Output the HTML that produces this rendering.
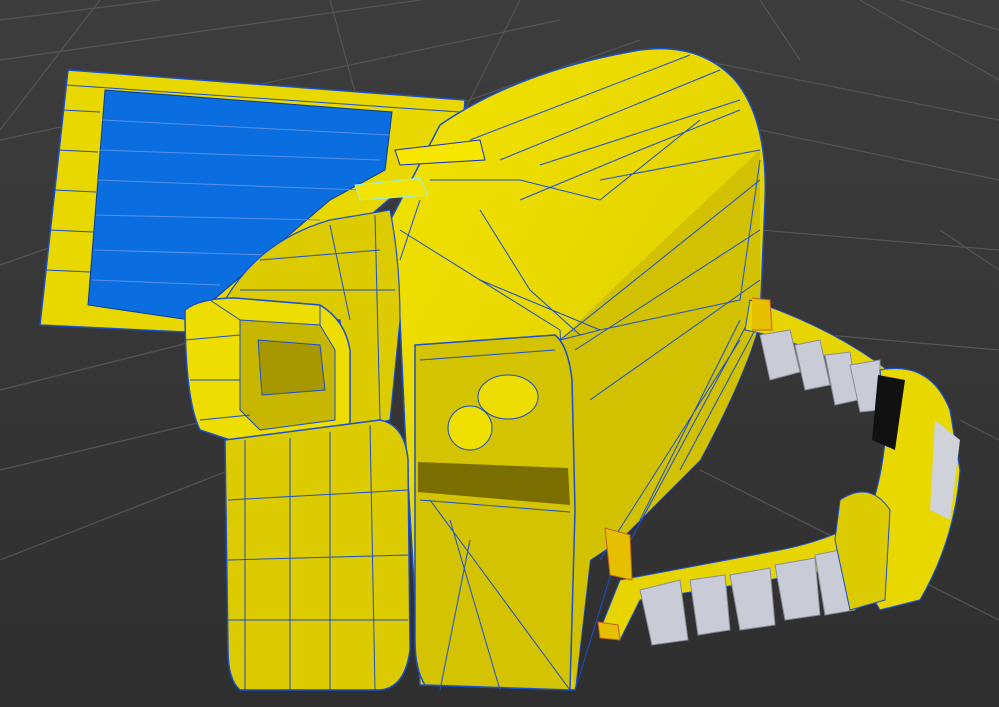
<!DOCTYPE html>
<html><head><style>html,body{margin:0;padding:0;background:#333;}svg{display:block}</style></head>
<body>
<svg width="999" height="707" viewBox="0 0 999 707" xmlns="http://www.w3.org/2000/svg">
<defs>
<linearGradient id="bg" x1="0" y1="0" x2="0" y2="1"><stop offset="0" stop-color="#3d3d3d"/><stop offset="1" stop-color="#2f2f2f"/></linearGradient>
<linearGradient id="top" x1="0" y1="0" x2="1" y2="1"><stop offset="0" stop-color="#f4e400"/><stop offset="1" stop-color="#d8c800"/></linearGradient>
</defs>
<rect width="999" height="707" fill="url(#bg)"/>
<g stroke="#555" stroke-width="1.2" fill="none">
<path d="M0 60 L420 0 M0 140 L560 20 M0 265 L640 40 M0 390 L240 330 M700 60 L999 120 M760 130 L999 180 M760 230 L999 250 M770 330 L999 350 M0 20 L160 0 M860 0 L999 80 M330 0 L360 110 M100 0 L0 130 M520 0 L460 120 M760 0 L800 60 M900 0 L999 30 M940 230 L999 270 M960 420 L999 440 M700 470 L999 620 M0 560 L230 470 M0 470 L210 420"/>
</g>
<!-- LCD panel -->
<polygon points="68,70 465,100 460,170 400,190 330,250 230,320 185,332 40,325" fill="#e8d800" stroke="#1a4fd0" stroke-width="1.5"/>
<g stroke="#1a4fd0" stroke-width="1" fill="none"><path d="M62 110 L100 112 M58 150 L98 152 M54 190 L96 192 M50 230 L93 232 M46 270 L90 272 M65 85 L460 112"/></g>
<polygon points="105,90 392,112 385,170 330,200 260,260 190,320 88,305" fill="#0a6ee0" stroke="#0b3a90"/>
<g stroke="#5a8fe6" stroke-width="1"><path d="M102 120 L390 135 M100 150 L380 160 M98 180 L360 190 M96 215 L320 220 M94 250 L270 255 M92 280 L220 285"/></g>
<!-- Main body -->
<path d="M440 125 Q520 70 640 50 Q700 42 735 80 Q768 120 765 200 L760 320 Q748 370 700 460 L620 540 L590 560 L575 690 L420 685 L405 430 L400 320 L380 240 Z" fill="url(#top)" stroke="#1a4fd0" stroke-width="1.5"/>
<path d="M560 340 Q600 300 760 150 L760 320 Q748 370 700 460 L620 540 L590 560 L575 690 L560 560 Z" fill="#d2c100"/>
<path d="M560 340 L600 330 L740 300 L760 160" fill="none" stroke="#1a4fd0"/>
<g stroke="#1a4fd0" stroke-width="1" fill="none">
<path d="M470 140 L690 55 M500 160 L720 70 M540 165 L740 100 M600 180 L760 150 M560 340 L760 180 M575 350 L760 230 M590 400 L760 280 M600 560 L740 340 M620 560 L760 300 M400 230 L560 330 M480 280 L600 330 M560 330 L570 520 M620 545 L575 690 M430 180 L520 180 L600 200 L700 120 M480 210 L530 290 L580 335 M420 200 L400 260 M640 520 L740 320 M680 470 L755 330 M520 200 L640 150 L740 110"/>
</g>
<!-- top buttons -->
<polygon points="395,150 480,140 485,160 400,165" fill="#f6e600" stroke="#1030c0"/>
<polygon points="355,185 420,178 428,195 360,200" fill="#f2e400" stroke="#9ee" />
<!-- eyepiece hood -->
<path d="M225 300 Q260 240 330 220 L390 210 Q400 260 400 320 L390 420 L350 430 L340 320 Z" fill="#dccb00" stroke="#1a4fd0" stroke-width="1.2"/>
<g stroke="#1a4fd0" stroke-width="1" fill="none"><path d="M260 260 L380 250 M240 290 L395 290 M330 225 L350 320 M375 215 L380 420"/></g>
<path d="M185 310 Q200 298 235 298 L320 305 Q345 320 350 350 L350 440 L260 450 L200 430 Q185 400 185 310 Z" fill="#eedd00" stroke="#1a4fd0" stroke-width="1.5"/>
<path d="M240 320 L320 325 L335 350 L335 420 L260 430 L240 410 Z" fill="#c8b700" stroke="#1a4fd0"/>
<path d="M258 340 L320 345 L325 390 L262 395 Z" fill="#a89800" stroke="#1a4fd0"/>
<g stroke="#1a4fd0" stroke-width="1" fill="none"><path d="M185 340 L240 335 M190 380 L240 380 M200 420 L250 415 M210 300 L240 320 M320 305 L320 325"/></g>
<!-- grip -->
<path d="M225 440 L380 420 Q405 425 408 460 L410 650 Q405 688 380 690 L240 690 Q228 680 228 650 Z" fill="#dccb00" stroke="#1a4fd0" stroke-width="1.5"/>
<g stroke="#1a4fd0" stroke-width="1" fill="none"><path d="M245 440 L245 690 M290 438 L290 690 M330 432 L330 690 M370 425 L375 690 M228 500 L408 490 M228 560 L408 555 M228 620 L408 620"/></g>
<!-- front face -->
<path d="M415 345 L555 335 Q568 345 572 380 L575 510 L570 690 L425 685 Q415 670 415 640 Z" fill="#d4c300" stroke="#1a4fd0" stroke-width="1.5"/>
<polygon points="418,462 568,468 570,505 418,492" fill="#7a6e00"/>
<g stroke="#1a4fd0" stroke-width="1" fill="none"><path d="M430 500 L570 690 M450 520 L500 690 M470 540 L440 690 M420 360 L555 350 M420 500 L570 512"/></g>
<ellipse cx="508" cy="397" rx="30" ry="22" fill="#eedd00" stroke="#1a4fd0"/>
<circle cx="470" cy="428" r="22" fill="#f0e000" stroke="#1a4fd0"/>
<!-- strap -->
<path d="M750 300 Q840 330 900 380 Q960 430 940 500 Q900 560 800 575 L640 600 L620 640 L600 630 L620 580 L780 550 Q880 530 910 470 Q920 420 850 370 Q800 340 745 330 Z" fill="#e6d500" stroke="#1a4fd0"/>
<g fill="#c9ccd6" stroke="#8a8e9a">
<polygon points="760,335 790,330 800,372 770,380"/><polygon points="795,345 820,340 830,385 805,390"/><polygon points="825,355 850,352 858,400 835,405"/><polygon points="850,365 880,360 880,410 860,412"/>
<polygon points="640,590 680,580 688,640 652,645"/><polygon points="690,580 725,575 730,630 698,635"/><polygon points="730,575 770,568 775,625 740,630"/><polygon points="775,565 815,558 820,615 785,620"/><polygon points="815,555 850,548 855,610 825,615"/><polygon points="850,545 880,540 882,600 858,605"/>
</g>
<!-- buckle -->
<path d="M880 370 Q930 360 950 410 L960 470 Q955 540 920 600 L880 610 L850 560 Q880 500 885 440 Z" fill="#e8d800" stroke="#1a4fd0" stroke-width="1.2"/>
<path d="M840 500 Q870 480 890 510 L885 600 L850 610 L835 540 Z" fill="#dccb00" stroke="#1a4fd0"/>
<polygon points="878,375 905,380 895,450 872,440" fill="#111"/>
<polygon points="935,420 960,440 950,520 930,510" fill="#d0d2da"/>
<!-- small orange clips -->
<path d="M752 298 L770 300 L772 330 L752 330" fill="#e6c000" stroke="#c06020"/>
<path d="M605 528 L630 535 L632 580 L610 575 Z" fill="#e6c000" stroke="#c06020"/>
<path d="M598 622 L618 625 L620 640 L600 638 Z" fill="#e6c000" stroke="#c06020"/>
</svg>
</body></html>
